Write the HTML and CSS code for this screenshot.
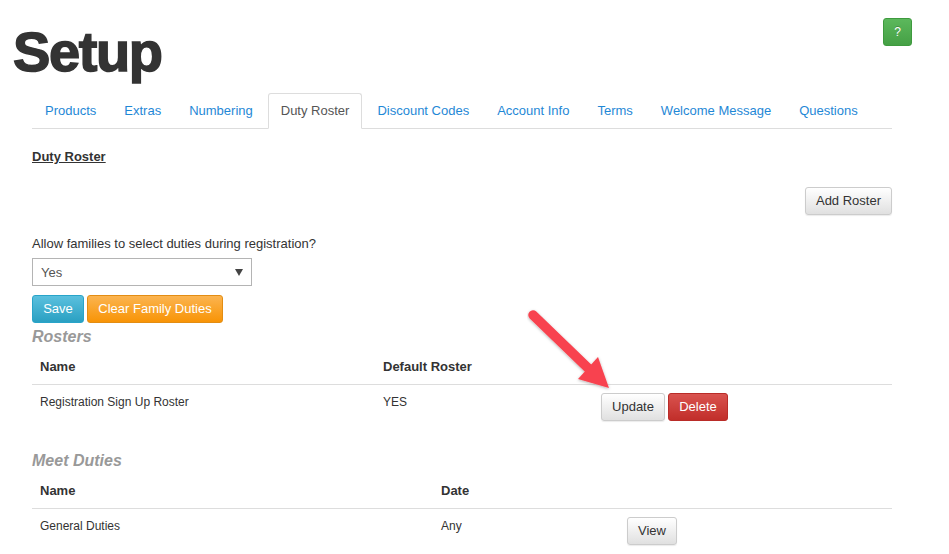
FILE: index.html
```html
<!DOCTYPE html>
<html lang="en">
<head>
<meta charset="utf-8">
<title>Setup</title>
<link rel="stylesheet" href="styles.css">
</head>
<body>
<header class="page-head">
  <h1 class="page-title">Setup</h1>
  <button class="btn btn-help">?</button>
</header>
<main class="content">
  <nav class="tabs">
    <a class="tab">Products</a>
    <a class="tab">Extras</a>
    <a class="tab">Numbering</a>
    <a class="tab active">Duty Roster</a>
    <a class="tab">Discount Codes</a>
    <a class="tab">Account Info</a>
    <a class="tab">Terms</a>
    <a class="tab">Welcome Message</a>
    <a class="tab">Questions</a>
  </nav>
  <h2 class="section-link">Duty Roster</h2>
  <div class="add-row"><button class="btn btn-default btn-add">Add Roster</button></div>
  <label class="field-label">Allow families to select duties during registration?</label>
  <div class="select"><span>Yes</span><i class="caret"></i></div>
  <div class="actions">
    <button class="btn btn-info">Save</button>
    <button class="btn btn-warning">Clear Family Duties</button>
  </div>
  <h3 class="sub">Rosters</h3>
  <table class="grid rosters">
    <thead><tr><th class="c1">Name</th><th class="c2">Default Roster</th><th></th></tr></thead>
    <tbody><tr>
      <td>Registration Sign Up Roster</td><td>YES</td>
      <td class="btns"><button class="btn btn-default btn-update">Update</button><button class="btn btn-danger">Delete</button></td>
    </tr></tbody>
  </table>
  <h3 class="sub sub-meet">Meet Duties</h3>
  <table class="grid meet">
    <thead><tr><th class="c1">Name</th><th class="c2">Date</th><th></th></tr></thead>
    <tbody><tr>
      <td>General Duties</td><td>Any</td>
      <td class="btns"><button class="btn btn-default btn-view">View</button></td>
    </tr></tbody>
  </table>
</main>
<svg class="arrow" width="100" height="90" viewBox="0 0 100 90">
  <defs><filter id="s" x="-20%" y="-20%" width="150%" height="150%"><feDropShadow dx="0" dy="1" stdDeviation="1.5" flood-color="#000" flood-opacity=".3"/></filter></defs>
  <g filter="url(#s)">
    <path d="M6 8 L62 62" stroke="#f8434f" stroke-width="9.5" stroke-linecap="round" fill="none"/>
    <path d="M71 50 L82 81 L51 72 Z" fill="#f8434f"/>
  </g>
</svg>
</body>
</html>
```

FILE: styles.css
```css
* { box-sizing: border-box; }
html, body { margin: 0; padding: 0; }
body {
  width: 949px;
  height: 554px;
  overflow: hidden;
  position: relative;
  background: #fff;
  color: #333;
  font-family: "Liberation Sans", Arial, sans-serif;
  font-size: 13px;
}
.page-head {
  display: flex;
  justify-content: space-between;
  align-items: flex-start;
  height: 93px;
  padding: 18px 37px 0 13px;
}
.page-title {
  margin: 0;
  font-size: 56px;
  line-height: 68px;
  font-weight: bold;
  letter-spacing: -1.4px;
  color: #333;
  -webkit-text-stroke: 1.5px #333;
}
.btn {
  display: inline-block;
  font-family: inherit;
  font-size: 13px;
  line-height: 20px;
  border-radius: 3px;
  border: 1px solid #ccc;
  cursor: pointer;
  padding: 3px 10px;
  height: 28px;
  margin: 0;
}
.btn-help {
  width: 29px;
  height: 28px;
  padding: 0;
  font-size: 12px;
  color: #fff;
  border-color: #3e9a3e;
  background: linear-gradient(#5cb85c, #45a045);
  text-shadow: 0 -1px 0 rgba(0,0,0,.2);
}
.content { width: 860px; margin-left: 32px; }
.tabs {
  display: flex;
  height: 36px;
  border-bottom: 1px solid #ddd;
}
.tab {
  display: block;
  height: 36px;
  padding: 7px 12px 0;
  margin-right: 2px;
  border: 1px solid transparent;
  line-height: 20px;
  color: #1f88d6;
  white-space: nowrap;
  font-size: 13px;
  border-radius: 3px 3px 0 0;
}
.tab.active {
  color: #555;
  background: #fff;
  border-color: #ddd #ddd #fff;
}
.section-link {
  margin: 20px 0 0;
  font-size: 13px;
  line-height: 16px;
  font-weight: bold;
  text-decoration: underline;
  color: #333;
}
.add-row {
  display: flex;
  justify-content: flex-end;
  margin-top: 22px;
}
.btn-default {
  color: #333;
  background: linear-gradient(#fff, #e0e0e0);
  border-color: #ccc;
  box-shadow: 0 1px 1px rgba(0,0,0,.08);
}
.btn-add { width: 87px; padding: 0; }
.field-label {
  display: block;
  margin-top: 21px;
  line-height: 16px;
  font-size: 13px;
  color: #333;
}
.select {
  width: 220px;
  height: 28px;
  margin-top: 6px;
  border: 1px solid #b4b4b4;
  padding: 0 8px;
  display: flex;
  align-items: center;
  justify-content: space-between;
  color: #555;
}
.caret {
  width: 0;
  height: 0;
  margin-right: 0;
  border-left: 4px solid transparent;
  border-right: 4px solid transparent;
  border-top: 7px solid #444;
}
.actions { display: flex; gap: 3px; margin-top: 9px; }
.btn-info {
  width: 52px;
  padding: 0;
  color: #fff;
  border-color: #28a4c9;
  background: linear-gradient(#5bc0de, #2aa0c2);
}
.btn-warning {
  width: 136px;
  padding: 0;
  color: #fff;
  border-color: #e38d13;
  background: linear-gradient(#fbb450, #f89406);
}
.btn-danger {
  width: 60px;
  padding: 0;
  color: #fff;
  border-color: #b92c28;
  background: linear-gradient(#d9534f, #c12e2a);
  margin-left: 3px;
}
.sub {
  margin: 4px 0 0;
  font-size: 16px;
  line-height: 20px;
  font-weight: bold;
  font-style: italic;
  color: #999;
}
.sub-meet { margin-top: 30px; }
.grid {
  width: 860px;
  table-layout: fixed;
  border-collapse: collapse;
  margin: 0;
}
.grid th {
  text-align: left;
  font-size: 13px;
  padding: 2px 8px 0;
  height: 37px;
  border-bottom: 1px solid #ddd;
  color: #333;
}
.grid td {
  font-size: 12px;
  padding: 9px 8px 0;
  height: 37px;
  vertical-align: top;
  line-height: 16px;
  color: #333;
}
.grid td.btns { padding-top: 8px; white-space: nowrap; font-size: 0; }
.rosters .c1 { width: 343px; }
.rosters .c2 { width: 218px; }
.meet .c1 { width: 401px; }
.meet .c2 { width: 186px; }
.btn-update { width: 64px; padding: 0; }
.btn-view { width: 50px; padding: 0; }
.arrow {
  position: absolute;
  left: 527px;
  top: 307px;
}
```
